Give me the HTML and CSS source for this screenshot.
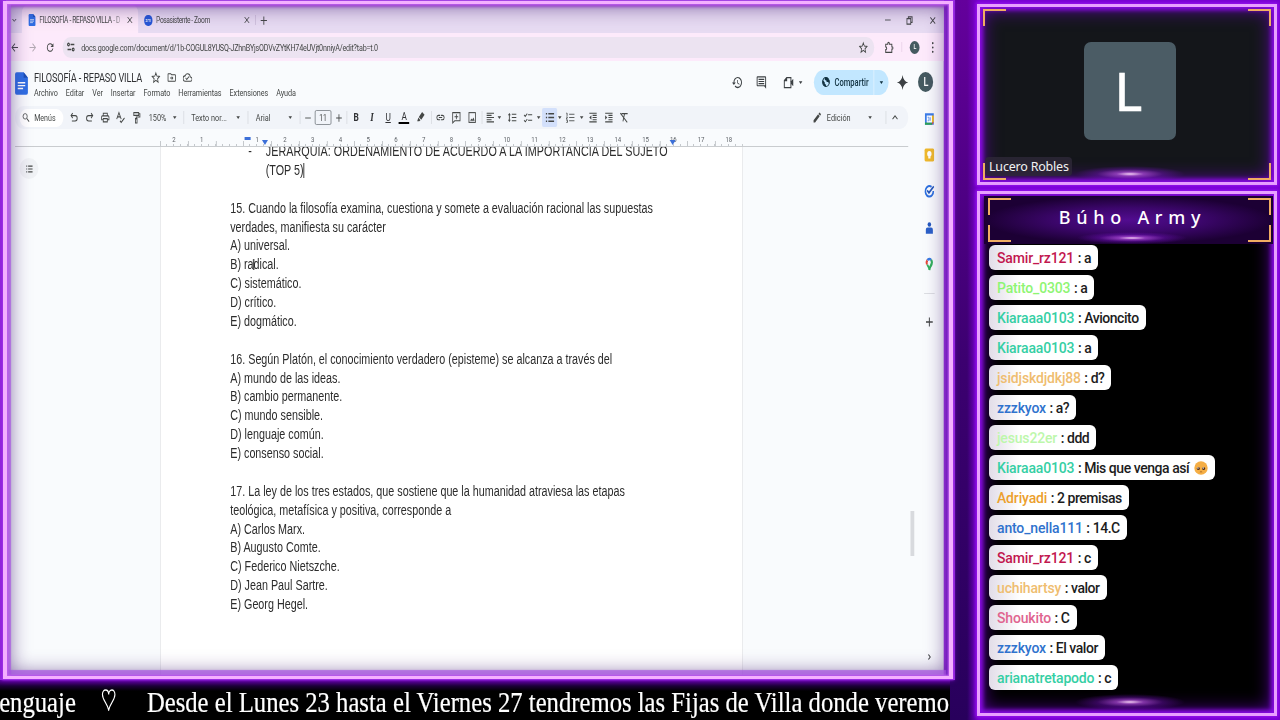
FILE: index.html
```html
<!DOCTYPE html>
<html lang="es">
<head>
    <meta charset="UTF-8">
    <meta name="viewport" content="width=device-width, initial-scale=1.0">
    <title>Búho Army</title>
    <link rel="stylesheet" href="styles.css">
</head>
<body>
    <svg class="sprite">
        <symbol id="x" viewBox="0 0 24 24"><path d="M5 5l14 14M19 5L5 19" fill="none" stroke="currentColor" stroke-width="2.4"/></symbol>
        <symbol id="plus" viewBox="0 0 24 24"><path d="M12 3v18M3 12h18" fill="none" stroke="currentColor" stroke-width="2.6"/></symbol>
        <symbol id="minus" viewBox="0 0 24 24"><path d="M3 12h18" fill="none" stroke="currentColor" stroke-width="2.4"/></symbol>
        <symbol id="down" viewBox="0 0 24 24"><path d="M5 9l7 7 7-7" fill="none" stroke="currentColor" stroke-width="3"/></symbol>
        <symbol id="up" viewBox="0 0 24 24"><path d="M6 15l6-6 6 6" fill="none" stroke="currentColor" stroke-width="2.2"/></symbol>
        <symbol id="next" viewBox="0 0 24 24"><path d="M9 6l6 6-6 6" fill="none" stroke="currentColor" stroke-width="2.6"/></symbol>
        <symbol id="caret" viewBox="0 0 24 24"><path d="M4 8h16l-8 9z"/></symbol>
        <symbol id="back" viewBox="0 0 24 24"><path d="M20 11H7.8l5.6-5.6L12 4l-8 8 8 8 1.4-1.4L7.8 13H20z"/></symbol>
        <symbol id="fwd" viewBox="0 0 24 24"><path d="M12 4l-1.4 1.4 5.6 5.6H4v2h12.200l-5.600 5.600L12 20l8-8z"/></symbol>
        <symbol id="reload" viewBox="0 0 24 24"><path d="M17.650 6.350A8 8 0 1 0 19.730 14h-2.080A6 6 0 1 1 12 6c1.660 0 3.140.69 4.220 1.780L13 11h7V4z"/></symbol>
        <symbol id="tune" viewBox="0 0 24 24"><g fill="none" stroke="currentColor" stroke-width="2.6"><path d="M11 7h10M3 17h10"/><circle cx="5.500" cy="7" r="2.500"/><circle cx="18" cy="17" r="2.500"/></g></symbol>
        <symbol id="star" viewBox="0 0 24 24"><path d="M12 3.500l2.600 5.900 6.400.6-4.800 4.300 1.400 6.200-5.600-3.300-5.600 3.300 1.400-6.200L3 10l6.400-.6z" fill="none" stroke="currentColor" stroke-width="1.900"/></symbol>
        <symbol id="ext" viewBox="0 0 24 24"><path d="M4 6h5V4.500a2 2 0 0 1 4 0V6h6v5h1a2 2 0 0 1 0 4h-1v6H4v-5a2.500 2.500 0 0 0 0-5z" fill="none" stroke="currentColor" stroke-width="2.200"/></symbol>
        <symbol id="dots" viewBox="0 0 24 24"><circle cx="12" cy="4" r="2"/><circle cx="12" cy="12" r="2"/><circle cx="12" cy="20" r="2"/></symbol>
        <symbol id="restore" viewBox="0 0 24 24"><path d="M5 8h11v12H5zM9 8V4h11v12h-4" fill="none" stroke="currentColor" stroke-width="2.400"/></symbol>
        <symbol id="move" viewBox="0 0 24 24"><path d="M20 6h-8l-2-2H4a2 2 0 0 0-2 2v12c0 1.100.9 2 2 2h16a2 2 0 0 0 2-2V8a2 2 0 0 0-2-2zm0 12H4V6h5.200l2 2H20zm-8-1l4-4-4-4v3H8v2h4z"/></symbol>
        <symbol id="cloud" viewBox="0 0 24 24"><path d="M19.350 10.040A7.490 7.490 0 0 0 12 4a7.500 7.500 0 0 0-6.650 4.040A6 6 0 0 0 6 20h13a5 5 0 0 0 .35-9.960zM19 18H6a4 4 0 0 1 0-8h.7a5.500 5.500 0 0 1 10.800 1.500v.5H19a3 3 0 0 1 0 6zm-9-3.800l-2.100-2.100L6.500 13.500 10 17l6-6-1.400-1.400z"/></symbol>
        <symbol id="history" viewBox="0 0 24 24"><path d="M13 3a9 9 0 0 0-9 9H1l3.900 3.900L9 12H6a7 7 0 1 1 2.060 4.940l-1.420 1.420A9 9 0 1 0 13 3zm-1 5v5l4.300 2.500.7-1.200-3.500-2.100V8z"/></symbol>
        <symbol id="comment" viewBox="0 0 24 24"><path d="M22 4a2 2 0 0 0-2-2H4a2 2 0 0 0-2 2v12c0 1.100.9 2 2 2h14l4 4zM4 4h16v12.500H4z" fill-rule="evenodd"/><path d="M6 6h12v1.900H6zm0 3.400h12v1.900H6zm0 3.400h12v1.900H6z"/></symbol>
        <symbol id="meet" viewBox="0 0 24 24"><path d="M8 4h9v16H3V9zM3 9h5V4" fill="none" stroke="currentColor" stroke-width="2"/><path d="M17 10l5-4v12l-5-4z"/></symbol>
        <symbol id="globe" viewBox="0 0 24 24"><circle cx="12" cy="12" r="9" fill="none" stroke="currentColor" stroke-width="2.400"/><path d="M4 8l5 5v3l3 1v4C6 21 3 16 4 8zM10 3l7 1 4 5v7l-3-4h-4l-1-3-4-1V6z"/></symbol>
        <symbol id="spark" viewBox="0 0 24 24"><path d="M12 0c1.200 7 5 10.800 12 12-7 1.200-10.800 5-12 12C10.800 17 7 13.200 0 12 7 10.800 10.800 7 12 0z"/></symbol>
        <symbol id="search" viewBox="0 0 24 24"><path d="M14.500 14.500L21 21" fill="none" stroke="currentColor" stroke-width="2.400"/><circle cx="9.500" cy="9.500" r="6" fill="none" stroke="currentColor" stroke-width="2"/></symbol>
        <symbol id="undo" viewBox="0 0 24 24"><path d="M8 4L4 8.500 8 13M4.500 8.500H14a5 5 0 0 1 0 10H6" fill="none" stroke="currentColor" stroke-width="2.200"/></symbol>
        <symbol id="redo" viewBox="0 0 24 24"><path d="M16 4l4 4.500-4 4.500M19.500 8.500H10a5 5 0 0 0 0 10h8" fill="none" stroke="currentColor" stroke-width="2.200"/></symbol>
        <symbol id="print" viewBox="0 0 24 24"><path d="M19 8h-1V3H6v5H5a3 3 0 0 0-3 3v6h4v4h12v-4h4v-6a3 3 0 0 0-3-3zM8 5h8v3H8zm8 14H8v-4h8zm4-4h-2v-2H6v2H4v-4c0-.6.4-1 1-1h14c.6 0 1 .4 1 1z"/></symbol>
        <symbol id="spell" viewBox="0 0 24 24"><path d="M3 15L8.500 3 14 15M5 11h7M11 18l3 3 8-8" fill="none" stroke="currentColor" stroke-width="2.200"/></symbol>
        <symbol id="paint" viewBox="0 0 24 24"><path d="M6 3h12v5H6zM18 5h3v6h-9v4" fill="none" stroke="currentColor" stroke-width="2"/><path d="M10 14h4v8h-4z" fill="none" stroke="currentColor" stroke-width="2"/></symbol>
        <symbol id="marker" viewBox="0 0 24 24"><path d="M15 2l6 5-8 9-6-5zM6 12l5 5-3 2H3z"/></symbol>
        <symbol id="link" viewBox="0 0 24 24"><path d="M11 8H7a4 4 0 0 0 0 8h4M13 8h4a4 4 0 0 1 0 8h-4M8 12h8" fill="none" stroke="currentColor" stroke-width="2"/></symbol>
        <symbol id="addc" viewBox="0 0 24 24"><path d="M3 3h18v15H8l-5 4zM12 6v9M7.500 10.500h9" fill="none" stroke="currentColor" stroke-width="2"/></symbol>
        <symbol id="image" viewBox="0 0 24 24"><rect x="4" y="3" width="16" height="18" fill="none" stroke="currentColor" stroke-width="2"/><path d="M7 18l3-4 2 2 3-4 3 6z"/></symbol>
        <symbol id="align" viewBox="0 0 24 24"><path d="M3 4h18M3 8h12M3 12h18M3 16h12M3 20h18" fill="none" stroke="currentColor" stroke-width="2"/></symbol>
        <symbol id="spacing" viewBox="0 0 24 24"><path d="M11 6h11M11 12h11M11 18h11M5 5v14" fill="none" stroke="currentColor" stroke-width="2.200"/><path d="M1.500 8L5 3.500 8.500 8zM1.500 16L5 20.500 8.500 16z"/></symbol>
        <symbol id="check" viewBox="0 0 24 24"><path d="M12 7h10M12 17h10M2 7l3 3 5-5M2 17l3 3 5-5" fill="none" stroke="currentColor" stroke-width="2"/></symbol>
        <symbol id="bullets" viewBox="0 0 24 24"><path d="M8 5h14M8 12h14M8 19h14M2 5h3M2 12h3M2 19h3" fill="none" stroke="currentColor" stroke-width="2.800"/></symbol>
        <symbol id="numbers" viewBox="0 0 24 24"><path d="M9 6h13M9 12h13M9 18h13M2 4h2v5M2 11h3l-3 4h3M2 17h3v4H2" fill="none" stroke="currentColor" stroke-width="1.800"/></symbol>
        <symbol id="outdent" viewBox="0 0 24 24"><path d="M3 4h18M11 8h10M11 12h10M11 16h10M3 20h18" fill="none" stroke="currentColor" stroke-width="2"/><path d="M8 8v8l-5-4z"/></symbol>
        <symbol id="indent" viewBox="0 0 24 24"><path d="M3 4h18M11 8h10M11 12h10M11 16h10M3 20h18" fill="none" stroke="currentColor" stroke-width="2"/><path d="M3 8v8l5-4z"/></symbol>
        <symbol id="clear" viewBox="0 0 24 24"><path d="M6 5h15M13.500 5l-4 14M3 4l17 17" fill="none" stroke="currentColor" stroke-width="2.200"/></symbol>
        <symbol id="pencil" viewBox="0 0 24 24"><path d="M3 17.200V21h3.800L17.800 9.900l-3.700-3.700zM20.700 7a1 1 0 0 0 0-1.400l-2.300-2.300a1 1 0 0 0-1.400 0l-1.800 1.800 3.700 3.700z"/></symbol>
        <symbol id="doc" viewBox="0 0 24 32"><path d="M3 0h13l8 8v21a3 3 0 0 1-3 3H3a3 3 0 0 1-3-3V3a3 3 0 0 1 3-3z" fill="#2f6fe4"/><path d="M16 0l8 8h-8z" fill="#1c4fb4"/><path d="M5 15h14M5 19h14M5 23h10" stroke="#fff" stroke-width="2"/></symbol>
        <symbol id="calendar" viewBox="0 0 24 24"><path d="M2 2h20v20H2z" fill="#3b7de8"/><path d="M18 6h4v12h-4z" fill="#f6bb1c"/><path d="M2 18h16v4H2z" fill="#2fa352"/><path d="M18 18h4l-4 4z" fill="#e6453a"/><path d="M6 6h12v12H6z" fill="#fff"/><path d="M8 9h3v6H8M14 9v6" fill="none" stroke="#4a87ea" stroke-width="1.500"/></symbol>
        <symbol id="keep" viewBox="0 0 24 24"><rect x="1" y="1" width="22" height="22" rx="3" fill="#efb92c"/><circle cx="12" cy="10" r="5" fill="#fff"/><path d="M9.500 14h5v4h-5z" fill="#fff"/></symbol>
        <symbol id="tasks" viewBox="0 0 24 24"><path d="M17 5a9 9 0 1 0 4 7" fill="none" stroke="#2d70df" stroke-width="3.600"/><path d="M7 11l4 4L22 4" fill="none" stroke="#2558bb" stroke-width="3.400"/></symbol>
        <symbol id="person" viewBox="0 0 24 24"><circle cx="12" cy="6" r="4" fill="#2458c0"/><path d="M4 22v-7a4 4 0 0 1 4-4h8a4 4 0 0 1 4 4v7z" fill="#2b60c8"/></symbol>
        <symbol id="pin" viewBox="0 0 24 24"><g fill="none" stroke-width="4.600"><path d="M6.500 12.500A6 6 0 0 1 7.500 5.500" stroke="#e5483b"/><path d="M7.500 5.500A6 6 0 0 1 16 5" stroke="#3a7be4"/><path d="M16 5c4 4 1 8-1 10.500-2 2-2.500 3.500-3 7" stroke="#31b05b"/><path d="M7 13c2 2.500 4 4.500 5 8" stroke="#31b05b" stroke-width="3.600"/></g></symbol>
        <symbol id="pleading" viewBox="0 0 24 24"><circle cx="12" cy="12" r="11.500" fill="#f5ae45"/><circle cx="7.500" cy="13" r="2.600" fill="#4a2a18"/><circle cx="16.500" cy="13" r="2.600" fill="#4a2a18"/><circle cx="6.800" cy="12" r="1.200" fill="#fff"/><circle cx="15.800" cy="12" r="1.200" fill="#fff"/><path d="M10 19q2-1.500 4 0" fill="none" stroke="#9a5a20" stroke-width="1.300"/></symbol>
    </svg>

    <div class="left">
        <div class="screen">
            <div class="window">
                <div class="tabs">
                    <span><svg class="i8"><use href="#down"/></svg></span>
                    <div class="tab active">
                        <svg class="tabdoc"><use href="#doc"/></svg>
                        <b class="tabtext">FILOSOFÍA - REPASO VILLA - D</b>
                        <svg class="i9"><use href="#x"/></svg>
                    </div>
                    <div class="tab second">
                        <i class="zoomlogo">zm</i>
                        <b class="tabtext">Posasistente - Zoom</b>
                        <svg class="i9"><use href="#x"/></svg>
                    </div>
                    <span class="newtab"><svg class="i10"><use href="#plus"/></svg></span>
                    <span></span>
                    <span><svg class="i9"><use href="#minus"/></svg></span>
                    <span><svg class="i10"><use href="#restore"/></svg></span>
                    <span><svg class="i10"><use href="#x"/></svg></span>
                </div>
                <div class="address">
                    <span><svg class="i12"><use href="#back"/></svg></span>
                    <span class="dim"><svg class="i12"><use href="#fwd"/></svg></span>
                    <span><svg class="i12"><use href="#reload"/></svg></span>
                    <div class="url">
                        <svg class="i11"><use href="#tune"/></svg>
                        <p>docs.google.com/document/d/1b-COGUL8YUSQ-JZhnBYjsODVvZYtKH74eUVjt0nniyA/edit?tab=t.0</p>
                        <svg class="i13"><use href="#star"/></svg>
                    </div>
                    <span class="puzzle"><svg class="i13"><use href="#ext"/></svg></span>
                    <span><i class="avatar small">L</i></span>
                    <span class="more"><svg class="i12"><use href="#dots"/></svg></span>
                </div>
                <div class="header">
                    <svg class="doclogo"><use href="#doc"/></svg>
                    <div class="titles">
                        <div class="title">
                            <h1>FILOSOFÍA - REPASO VILLA</h1>
                            <svg class="i12"><use href="#star"/></svg>
                            <svg class="i12"><use href="#move"/></svg>
                            <svg class="i12"><use href="#cloud"/></svg>
                        </div>
                        <ul class="menu">
                            <li>Archivo</li><li>Editar</li><li>Ver</li><li>Insertar</li><li>Formato</li><li>Herramientas</li><li>Extensiones</li><li>Ayuda</li>
                        </ul>
                    </div>
                    <div class="actions">
                        <span><svg class="i14"><use href="#history"/></svg></span>
                        <span><svg class="i14"><use href="#comment"/></svg></span>
                        <span class="call"><svg class="i14"><use href="#meet"/></svg><svg class="i6"><use href="#caret"/></svg></span>
                        <div class="share"><svg class="i11"><use href="#globe"/></svg><b>Compartir</b><em><svg class="i6"><use href="#caret"/></svg></em></div>
                        <span><svg class="i14"><use href="#spark"/></svg></span>
                        <span><i class="avatar">L</i></span>
                    </div>
                </div>
                <div class="work">
                    <div class="editor">
                        <div class="toolbar">
                            <span><div class="search"><svg class="i10"><use href="#search"/></svg>Menús</div></span>
                            <span><svg><use href="#undo"/></svg></span>
                            <span><svg><use href="#redo"/></svg></span>
                            <span><svg><use href="#print"/></svg></span>
                            <span><svg><use href="#spell"/></svg></span>
                            <span><svg><use href="#paint"/></svg></span>
                            <span>150%</span>
                            <span><svg class="i6"><use href="#caret"/></svg></span>
                            <span class="sep"></span>
                            <span>Texto nor...</span>
                            <span><svg class="i6"><use href="#caret"/></svg></span>
                            <span class="sep"></span>
                            <span class="font">Arial</span>
                            <span><svg class="i6"><use href="#caret"/></svg></span>
                            <span class="sep"></span>
                            <span><svg class="i9"><use href="#minus"/></svg></span>
                            <span class="size">11</span>
                            <span><svg class="i9"><use href="#plus"/></svg></span>
                            <span class="sep"></span>
                            <span class="fmt"><b>B</b></span>
                            <span class="fmt"><i>I</i></span>
                            <span class="fmt"><u>U</u></span>
                            <span class="fmt"><em class="color">A</em></span>
                            <span><svg><use href="#marker"/></svg></span>
                            <span class="sep"></span>
                            <span><svg><use href="#link"/></svg></span>
                            <span><svg><use href="#addc"/></svg></span>
                            <span><svg><use href="#image"/></svg></span>
                            <span class="sep"></span>
                            <span><svg><use href="#align"/></svg></span>
                            <span><svg class="i6"><use href="#caret"/></svg></span>
                            <span><svg><use href="#spacing"/></svg></span>
                            <span><svg><use href="#check"/></svg></span>
                            <span><svg class="i6"><use href="#caret"/></svg></span>
                            <span class="on"><svg><use href="#bullets"/></svg></span>
                            <span><svg class="i6"><use href="#caret"/></svg></span>
                            <span><svg><use href="#numbers"/></svg></span>
                            <span><svg class="i6"><use href="#caret"/></svg></span>
                            <span><svg><use href="#outdent"/></svg></span>
                            <span><svg><use href="#indent"/></svg></span>
                            <span><svg><use href="#clear"/></svg></span>
                            <span></span>
                            <span><svg><use href="#pencil"/></svg></span>
                            <span>Edición</span>
                            <span class="mode"><svg class="i6"><use href="#caret"/></svg></span>
                            <span class="sep"></span>
                            <span class="fold"><svg><use href="#up"/></svg></span>
                        </div>
                        <div class="ruler">
                            <i>2</i><i>1</i><i></i><i>1</i><i>2</i><i>3</i><i>4</i><i>5</i><i>6</i><i>7</i><i>8</i><i>9</i><i>10</i><i>11</i><i>12</i><i>13</i><i>14</i><i>15</i><i>16</i><i>17</i><i>18</i>
                            <b class="first"></b><b class="mark"></b><b class="mark end"></b>
                        </div>
                        <div class="canvas">
                            <div class="outline"><svg class="i9"><use href="#bullets"/></svg></div>
                            <div class="page">
                                <p class="item"><span>-</span>JERARQUÍA: ORDENAMIENTO DE ACUERDO A LA IMPORTANCIA DEL SUJETO</p>
                                <p class="item">(TOP 5)<s class="cursor"></s></p>
                                <br>
                                <p>15. Cuando la filosofía examina, cuestiona y somete a evaluación racional las supuestas</p>
                                <p>verdades, manifiesta su carácter</p>
                                <p>A) universal.</p>
                                <p>B) ra<s class="ibeam"></s>dical.</p>
                                <p>C) sistemático.</p>
                                <p>D) crítico.</p>
                                <p>E) dogmático.</p>
                                <br>
                                <p>16. Según Platón, el conocimiento verdadero (episteme) se alcanza a través del</p>
                                <p>A) mundo de las ideas.</p>
                                <p>B) cambio permanente.</p>
                                <p>C) mundo sensible.</p>
                                <p>D) lenguaje común.</p>
                                <p>E) consenso social.</p>
                                <br>
                                <p>17. La ley de los tres estados, que sostiene que la humanidad atraviesa las etapas</p>
                                <p>teológica, metafísica y positiva, corresponde a</p>
                                <p>A) Carlos Marx.</p>
                                <p>B) Augusto Comte.</p>
                                <p>C) Federico Nietszche.</p>
                                <p>D) Jean Paul Sartre.</p>
                                <p>E) Georg Hegel.</p>
                            </div>
                            <div class="thumb"></div>
                        </div>
                    </div>
                    <div class="side">
                        <svg><use href="#calendar"/></svg>
                        <svg><use href="#keep"/></svg>
                        <svg><use href="#tasks"/></svg>
                        <svg><use href="#person"/></svg>
                        <svg><use href="#pin"/></svg>
                        <hr>
                        <svg class="add"><use href="#plus"/></svg>
                        <svg class="hide"><use href="#next"/></svg>
                    </div>
                </div>
            </div>
        </div>
        <div class="ticker"><p><span>enguaje</span><svg class="heart" viewBox="0 0 16 22"><path d="M8 21C6 14 .8 11 .8 5.500.8 2.500 2.500 1 4.300 1 6.500 1 8 3 8 5.500 8 3 9.500 1 11.700 1c1.800 0 3.500 1.500 3.500 4.500C15.200 11 10 14 8 21z"/></svg><span>Desde el Lunes 23 hasta el Viernes 27 tendremos las Fijas de Villa donde veremo</span></p></div>
    </div>

    <div class="right">
        <div class="panel cam">
            <div class="corners"><i></i><i></i><i></i><i></i></div>
            <div class="face">L</div>
            <div class="name">Lucero Robles</div>
            <div class="flare"></div>
        </div>
        <div class="panel chat">
            <div class="chathead">
                <div class="corners"><i></i><i></i><i></i><i></i></div>
                <h2>Búho Army</h2>
                <div class="flare"></div>
            </div>
            <ul class="messages">
                <li><b class="red">Samir_rz121</b> : a</li>
                <li><b class="lime">Patito_0303</b> : a</li>
                <li><b class="teal">Kiaraaa0103</b> : Avioncito</li>
                <li><b class="teal">Kiaraaa0103</b> : a</li>
                <li><b class="sand">jsidjskdjdkj88</b> : d?</li>
                <li><b class="blue">zzzkyox</b> : a?</li>
                <li><b class="pale">jesus22er</b> : ddd</li>
                <li><b class="teal">Kiaraaa0103</b> : Mis que venga así <svg class="emoji"><use href="#pleading"/></svg></li>
                <li><b class="orange">Adriyadi</b> : 2 premisas</li>
                <li><b class="blue">anto_nella111</b> : 14.C</li>
                <li><b class="red">Samir_rz121</b> : c</li>
                <li><b class="sand">uchihartsy</b> : valor</li>
                <li><b class="pink">Shoukito</b> : C</li>
                <li><b class="blue">zzzkyox</b> : El valor</li>
                <li><b class="teal">arianatretapodo</b> : c</li>
            </ul>
            <div class="flare"></div>
        </div>
    </div>
</body>
</html>
```
FILE: styles.css
```css
*,*:after{
    padding:0;
    margin:0;
    box-sizing:border-box;
}
li{
    list-style:none;
}
i,em{
    font-style:normal;
}
body{
    width:1280px;
    height:720px;
    overflow:hidden;
    display:flex;
    background:linear-gradient(#64009c,#3c0070 50%,#28005c);
    font-family:Roboto,"Liberation Sans",sans-serif;
}
.sprite{
    position:absolute;
    width:0;
    height:0;
}
svg{
    display:block;
    fill:currentColor;
    flex:none;
}
.i6{width:7px;height:7px;}
.i8{width:8px;height:8px;}
.i9{width:10px;height:10px;}
.i10{width:11px;height:11px;}
.i11{width:12px;height:12px;}
.i12{width:13px;height:13px;}
.i13{width:13px;height:13px;}
.i14{width:15px;height:15px;}

.left{
    width:955px;
    flex:none;
}
/* shared screen with its neon frame */
.screen{
    position:relative;
    height:680px;
    padding-left:6px;
    background:#a030e8;
}
.screen:after{
    content:"";
    position:absolute;
    left:3px;
    top:1px;
    width:950px;
    height:678px;
    border:solid #f4b0ff;
    border-width:3px 4px;
    box-shadow:0 0 2px 1px #a838ee,
        0 0 5px 1px #6a00b8,
        inset 0 0 2px 1px #c060f0,
        inset 4px 0 1px rgba(168,84,226,.75),
        inset -3px 0 1px rgba(112,28,186,.85),
        inset 0 -6px 1px rgba(168,84,226,.75),
        inset 0 3px 3px rgba(146,44,204,.8),
        inset 0 0 20px 3px rgba(62,24,110,.6);
}
/* the stream is squeezed horizontally, rows use fr = px on screen */
.window{
    width:1242.4px;
    height:675px;
    overflow:hidden;
    display:flex;
    flex-direction:column;
    transform:scaleX(.755);
    transform-origin:0 0;
    background:#f9fbfd;
    color:#444746;
}
.tabs{
    height:33px;
    flex:none;
    padding-top:7px;
    display:grid;
    grid-template-columns:16fr 116fr 117fr 17fr 605fr 21fr 23fr 23fr;
    background:#e7dbf2;
}
.tabs>*,.address>*,.toolbar>*{
    min-width:0;
    display:flex;
    align-items:center;
    justify-content:center;
    white-space:nowrap;
}
.tab{
    padding:0 6px 0 8px;
    font-size:8.800px;
}
.tab.active{
    background:#fdeafa;
    border-radius:8px 8px 0 0;
    margin-top:-2px;
    padding-top:2px;
}
.tab .tabtext{
    flex:1;
    font-weight:400;
    margin:0 5px;
    overflow:hidden;
    letter-spacing:-.45px;
}
.tab.active .tabtext{
    margin-left:4px;
    -webkit-mask-image:linear-gradient(90deg,#000 88%,rgba(0,0,0,.2));
    mask-image:linear-gradient(90deg,#000 88%,rgba(0,0,0,.2));
}
.tab.second .tabtext{
    letter-spacing:-.5px;
}
.tabdoc{
    width:11px;
    height:12px;
}
.zoomlogo{
    width:11px;
    height:11px;
    border-radius:5px;
    background:#2557d6;
    color:#fff;
    font-size:5px;
    line-height:10px;
    text-align:center;
}
.newtab{
    border-left:1px solid #cbbcd8;
    height:10px;
    align-self:center;
}
.address{
    height:28px;
    flex:none;
    display:grid;
    grid-template-columns:18fr 17fr 19fr 816fr 26fr 26fr 16fr;
    background:#fdeafb;
}
.dim{
    opacity:.4;
}
.url{
    height:21px;
    align-self:center;
    margin:0 2px 0 3px;
    padding:0 8px 0 5px;
    border-radius:11px;
    background:#ece3f1;
    font-size:9.500px;
}
.url p{
    flex:1;
    margin-left:8px;
    letter-spacing:-.26px;
}
.puzzle{
    border-right:1px solid #e6cfe6;
    height:10px;
    align-self:center;
}
.address .more{
    padding-right:8px;
}
.avatar{
    width:20px;
    height:20px;
    border-radius:50%;
    background:#455a60;
    color:#fff;
    font-size:12px;
    font-weight:500;
    line-height:20px;
    text-align:center;
}
.avatar.small{
    width:13px;
    height:13px;
    font-size:7px;
    line-height:13px;
}
.header{
    height:45px;
    flex:none;
    display:flex;
    padding:8px 0 0 12px;
}
.doclogo{
    width:17px;
    height:23px;
    margin-top:3px;
}
.titles{
    margin-left:8px;
}
.title{
    display:flex;
    align-items:center;
    height:17px;
    gap:8px;
}
.title h1{
    font-size:12.200px;
    font-weight:400;
    letter-spacing:-.2px;
    margin-right:4px;
    color:#303134;
}
.menu{
    display:flex;
    gap:10.600px;
    font-size:9.600px;
    letter-spacing:-.06px;
    line-height:14px;
}
.actions{
    flex:1;
    height:26px;
    display:flex;
    align-items:center;
    justify-content:flex-end;
    padding-right:9px;
    color:#3c4043;
}
.actions>span{
    width:32px;
    display:flex;
    justify-content:center;
}
.actions>.call{
    width:47px;
    align-items:center;
    gap:5px;
    padding-left:5px;
}
.share{
    width:99px;
    height:25px;
    margin:0 2px 0 7px;
    border-radius:13px;
    display:flex;
    align-items:center;
    background:#c2e7ff;
    color:#10303f;
    font-size:10px;
    padding-left:10px;
}
.share b{
    font-weight:500;
    margin-left:5px;
    flex:1;
}
.share em{
    width:20px;
    height:25px;
    display:flex;
    align-items:center;
    justify-content:center;
    border-left:1px solid #e4f4ff;
}
.actions>span:last-child{
    width:30px;
}
.work{
    flex:1;
    display:flex;
}
.editor{
    width:1203px;
    flex:none;
    display:flex;
    flex-direction:column;
}
.toolbar{
    width:1183px;
    height:23px;
    flex:none;
    margin-left:12px;
    border-radius:11px;
    background:#f1f4f9;
    font-size:9.700px;
    display:grid;
    grid-template-columns:51fr 16fr 15fr 16fr 15fr 16fr 27fr 8fr 10fr 40fr 18fr 2fr 32fr 18fr 2fr 14fr 16fr 15fr 2fr 16fr 16fr 16fr 16fr 18fr 2fr 16fr 16fr 16fr 4fr 12fr 7fr 18fr 14fr 7fr 15fr 6fr 15fr 7fr 16fr 15fr 16fr 176fr 18fr 25fr 34fr 2fr 21fr;
}
.toolbar svg:not([class]){
    width:13px;
    height:13px;
}
.search{
    width:58px;
    height:18px;
    margin-left:3px;
    padding-left:3px;
    border-radius:9px;
    background:#fff;
    display:flex;
    align-items:center;
    gap:5px;
    font-size:9.400px;
}
.sep:after{
    content:"";
    width:1px;
    height:13px;
    background:#d6d9de;
}
.toolbar .font{
    padding-right:5px;
}
.toolbar .mode{
    padding-left:5px;
}
.toolbar .fold{
    padding-right:8px;
}
.toolbar .size{
    height:15px;
    align-self:center;
    border:1px solid #80868b;
    border-radius:2px;
    font-size:9px;
}
.fmt{
    font-size:11px;
    color:#303134;
}
.fmt i{
    font:italic 700 12px "Liberation Serif",serif;
}
.color{
    width:14px;
    line-height:11px;
    text-align:center;
    border-bottom:2px solid #000;
}
.on{
    background:#d3e0fb;
    border-radius:2px;
    height:19px;
    align-self:center;
}
.ruler{
    position:relative;
    height:18px;
    flex:none;
    margin-left:12px;
    width:1183px;
    padding:5px 0 0 192px;
    display:flex;
    border-bottom:1px solid #c9cccf;
}
.ruler i{
    width:36.760px;
    flex:none;
    text-align:center;
    font-size:8px;
    line-height:11px;
    color:#5f6368;
    background:
        linear-gradient(#b4b8bc,#b4b8bc) 0 100%/1px 5px no-repeat,
        repeating-linear-gradient(90deg,transparent 0 8.190px,#c4c8cc 8.190px 9.190px) 0 100%/100% 2px no-repeat;
}
.ruler b{
    position:absolute;
}
.first{
    left:304px;
    top:8px;
    width:8px;
    height:3px;
    background:#3c6fd8;
}
.mark{
    left:327px;
    top:11px;
    border:solid transparent;
    border-width:5px 4px 0;
    border-top-color:#3c6fd8;
}
.mark.end{
    left:867px;
}
.canvas{
    position:relative;
    flex:1;
    padding-left:204px;
}
.outline{
    position:absolute;
    left:18px;
    top:11px;
    width:25px;
    height:21px;
    border-radius:50%;
    background:#f0f2f5;
    display:flex;
    align-items:center;
    justify-content:center;
}
.page{
    width:772px;
    height:528px;
    overflow:hidden;
    padding:0 0 0 92px;
    background:#fff;
    border:solid #e3e5e8;
    border-width:0 1px;
    color:#2c2c2c;
    font:14.270px/18.880px "Liberation Sans",Arial,sans-serif;
    white-space:nowrap;
}
.page>:first-child{
    margin-top:-5px;
    letter-spacing:.06px;
}
.item{
    padding-left:47px;
    position:relative;
}
.item span{
    position:absolute;
    left:24px;
}
.cursor,.ibeam{
    display:inline-block;
    width:1px;
    height:15px;
    background:#000;
    vertical-align:-3px;
}
.ibeam{
    width:2px;
    height:11px;
    margin:0 -1px;
    background:#555;
    vertical-align:-1px;
}
.thumb{
    position:absolute;
    left:1198px;
    top:364px;
    width:5px;
    height:45px;
    background:#d8dade;
}
.side{
    flex:1;
    padding:6px 0 0 1px;
    display:flex;
    flex-direction:column;
    align-items:center;
    gap:22.200px;
}
.side svg{
    width:14px;
    height:14px;
}
.side hr{
    width:14px;
    border:0;
    border-top:1px solid #dcdee2;
}
.side .add{
    width:12px;
    height:12px;
}
.side .hide{
    width:10px;
    height:10px;
    margin-top:auto;
    margin-bottom:13px;
}
.ticker{
    height:40px;
    overflow:hidden;
    margin-right:5px;
    background:linear-gradient(#5e00a0,#1c0038 6px,#000 11px);
    color:#fff;
}
.ticker p{
    width:1110px;
    display:flex;
    height:40px;
    padding-top:6px;
    font:28.500px/34px "Liberation Serif",serif;
    -webkit-text-stroke:.2px #fff;
    white-space:nowrap;
    transform:scaleX(.866);
    transform-origin:0 0;
}
.ticker span:first-child{
    margin-left:-1px;
}
.heart{
    width:19px;
    height:22px;
    margin:3px 35px 0 28px;
    fill:none;
    stroke:#fff;
    stroke-width:1.300;
}

.right{
    flex:1;
    padding:4px 3px 4px 22px;
    display:flex;
    flex-direction:column;
    gap:6px;
    background:linear-gradient(90deg,transparent 12px,#7a00d0 24px);
}
.panel{
    position:relative;
    border:3px solid #e8a0ff;
    box-shadow:0 0 3px 1px #9a14f0,0 0 6px 1px #7a00d8;
}
.panel:after{
    content:"";
    position:absolute;
    inset:0;
    box-shadow:inset 0 0 4px 3px #8a0ae6,inset 0 0 18px 3px rgba(110,0,200,.75);
}
.cam{
    height:181px;
    background:#14161a;
}
.corners{
    position:absolute;
    inset:2px 3px;
    z-index:2;
}
.corners i{
    position:absolute;
    width:23px;
    height:17px;
    border:solid #f0ad62;
    border-width:2px 0 0 2px;
    left:0;
    top:0;
}
.corners i:nth-child(2){
    left:auto;
    right:0;
    border-width:2px 2px 0 0;
}
.corners i:nth-child(3){
    top:auto;
    bottom:0;
    border-width:0 0 2px 2px;
}
.corners i:nth-child(4){
    top:auto;
    left:auto;
    right:0;
    bottom:0;
    border-width:0 2px 2px 0;
}
.face{
    width:92px;
    height:98px;
    margin:35px auto 0 104px;
    border-radius:7px;
    background:#4b5c65;
    color:#fff;
    font:53px/98px "Noto Sans",sans-serif;
    -webkit-text-stroke:.6px #fff;
    text-align:center;
    text-indent:-3px;
}
.name{
    position:absolute;
    z-index:1;
    left:5px;
    bottom:6px;
    width:87px;
    height:19px;
    padding-left:4px;
    border-radius:4px;
    background:rgba(46,40,56,.8);
    color:#f2f2f2;
    font:12.500px/19px "Noto Sans",sans-serif;
    letter-spacing:-.2px;
    white-space:nowrap;
}
.flare{
    position:absolute;
    z-index:2;
    left:50%;
    bottom:0;
    width:110px;
    height:16px;
    margin-left:-52px;
    background:radial-gradient(closest-side,rgba(255,214,255,.95),rgba(190,80,240,.65) 25%,rgba(140,20,230,.3) 60%,transparent);
}
.chat{
    flex:1;
    background:#000;
}
.chat>.flare{
    bottom:3px;
}
.chathead{
    position:relative;
    z-index:1;
    height:48px;
    margin:2px 1px 0 4px;
    background:radial-gradient(closest-side,#520c90,#3c066c 50%,#1c0034);
}
.chathead .corners{
    inset:2px 2px 2px 4px;
}
.chathead h2{
    color:#fff;
    font:500 18px/43px "Noto Sans",sans-serif;
    letter-spacing:5.700px;
    text-align:center;
    padding-left:8px;
}
.chathead .flare{
    height:12px;
    bottom:0;
}
.messages{
    padding:1px 0 0 9px;
}
.messages li{
    width:fit-content;
    height:25px;
    margin-bottom:5px;
    padding:0 7px 0 8px;
    border-radius:6px;
    background:linear-gradient(90deg,#e2dde8,#fff 32px);
    position:relative;
    z-index:1;
    color:#1c1c1c;
    font-size:14px;
    font-weight:500;
    letter-spacing:-.45px;
    line-height:26px;
    white-space:nowrap;
}
.messages b{
    font-weight:500;
    letter-spacing:-.16px;
    margin-right:.5px;
}
.emoji{
    display:inline-block;
    width:14px;
    height:14px;
    margin:0 0 0 2px;
    vertical-align:-2px;
}
.red{color:#c2174f;}
.lime{color:#8ef573;}
.teal{color:#35cfa4;}
.sand{color:#efbd70;}
.blue{color:#2f72cd;}
.pale{color:#bdf7ab;}
.orange{color:#eca02e;}
.pink{color:#e0648f;}
```
